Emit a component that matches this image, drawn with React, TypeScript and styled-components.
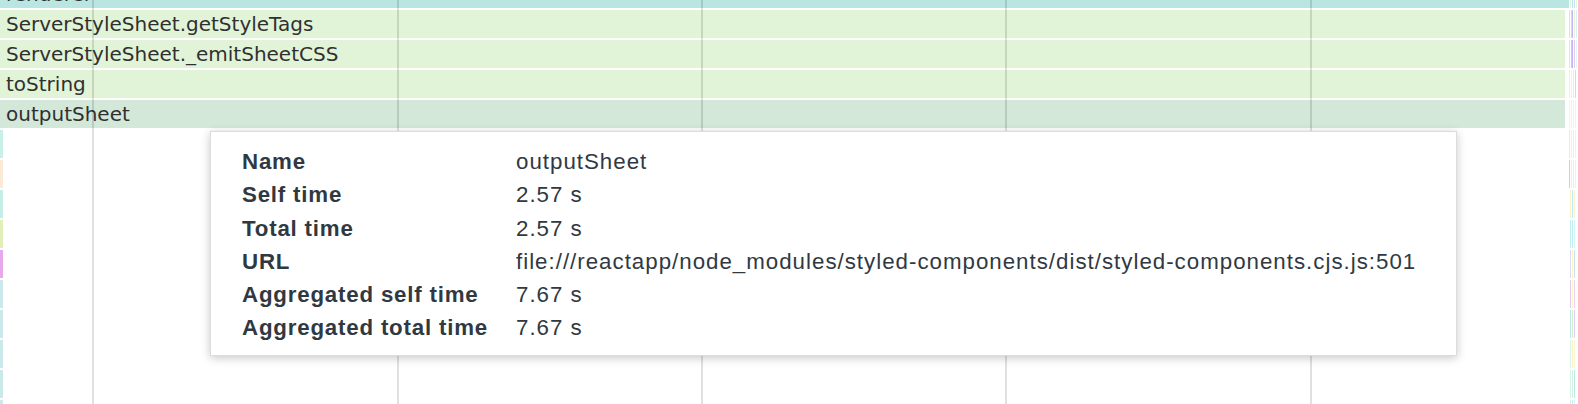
import React from "react";
import styled, { createGlobalStyle } from "styled-components";

const GlobalStyle = createGlobalStyle`
  html, body { margin: 0; padding: 0; background: #ffffff; overflow: hidden; }
  #root { width: 1578px; height: 404px; }
`;

const Chart = styled.div`
  position: relative;
  width: 1578px;
  height: 404px;
  overflow: hidden;
  background: #ffffff;
`;

const Rows = styled.div`
  display: flex;
  flex-direction: column;
  gap: 2px;
  margin-top: -20px;
`;

const Row = styled.div`
  display: flex;
  height: 28px;
  align-items: stretch;
`;

const EdgeStripe = styled.div<{ $c?: string }>`
  width: 3px;
  flex: none;
  background: ${(p) => p.$c ?? "transparent"};
`;

const Bar = styled.div<{ $bg: string; $end: number }>`
  width: ${(p) => p.$end}px;
  flex: none;
  background: ${(p) => p.$bg};
  font-family: "DejaVu Sans", Verdana, sans-serif;
  font-size: 20px;
  line-height: 28px;
  color: #303030;
  padding-left: 6px;
  box-sizing: border-box;
  white-space: nowrap;
  overflow: hidden;
`;

const Spacer = styled.div`
  flex: 1;
`;

const Stripes = styled.div<{ $colors: string[] }>`
  width: 10px;
  flex: none;
  margin-left: auto;
  background: linear-gradient(
    to right,
    ${(p) =>
      p.$colors
        .map((c, i) => `${c} ${i * (100 / p.$colors.length)}%, ${c} ${(i + 1) * (100 / p.$colors.length)}%`)
        .join(", ")}
  );
`;

const GridLine = styled.div<{ $x: number }>`
  position: absolute;
  top: 0;
  bottom: 0;
  left: ${(p) => p.$x}px;
  width: 2px;
  background: rgba(0, 0, 0, 0.12);
  pointer-events: none;
`;

const Tooltip = styled.div`
  position: absolute;
  left: 210px;
  top: 131px;
  width: 1247px;
  height: 225px;
  box-sizing: border-box;
  background: #ffffff;
  border: 1px solid #dcdcdc;
  box-shadow: 0 2px 9px rgba(0, 0, 0, 0.22);
  padding: 13px 0 0 31px;
`;

const InfoGrid = styled.div`
  display: grid;
  grid-template-columns: 274px auto;
  font-family: "Liberation Sans", Arial, Helvetica, sans-serif;
  font-size: 22.3px;
  line-height: 33.3px;
  color: #303942;
  white-space: nowrap;
`;

const Label = styled.div`
  font-weight: 700;
  letter-spacing: 0.8px;
`;

const Value = styled.div`
  font-weight: 400;
  letter-spacing: 1px;
`;

const W = "#ffffff";
const rowsData = [
  { text: "renderer", bg: "#b9e6e1", end: 1569, left: undefined as string | undefined, stripes: [W, "#e6f5e0", W, "#b9e6e1", W, "#c9e0f5", W, "#e6f5e0", W, W] },
  { text: "ServerStyleSheet.getStyleTags", bg: "#e2f4d8", end: 1565, left: undefined, stripes: [W, "#c6eedf", W, "#b6e6f4", "#c7b4f0", W, "#e2f4d8", W, "#d8f0f8", W] },
  { text: "ServerStyleSheet._emitSheetCSS", bg: "#e2f4d8", end: 1565, left: undefined, stripes: [W, "#e7e0f6", W, "#d8c4f5", "#c7b4f0", W, "#dcd0f5", W, "#e6f4fa", W] },
  { text: "toString", bg: "#e2f4d8", end: 1565, left: undefined, stripes: [W, "#e6f5e0", W, "#fbf2c8", W, "#f7ecc0", W, "#f6d4a8", W, W] },
  { text: "outputSheet", bg: "#d3e8d8", end: 1565, left: undefined, stripes: [W, "#f9f5dc", W, "#fbf0c8", W, "#f9f1d0", W, "#fbf1d4", W, W] },
  { text: "", bg: "", end: 0, left: "#c8f0e6", stripes: [W, "#dbf2d8", W, "#fbf2c8", W, "#f9efc4", W, "#fbf1d4", W, W] },
  { text: "", bg: "", end: 0, left: "#fde9d6", stripes: [W, "#e4c0f0", W, "#fbf2c8", W, "#f9efc4", W, "#fbf1d4", W, W] },
  { text: "", bg: "", end: 0, left: "#c6eee6", stripes: [W, W, "#fbf2c8", W, "#bfeaf4", W, "#fbf1d4", W, W, W] },
  { text: "", bg: "", end: 0, left: "#e2efb8", stripes: [W, W, "#c6f0f4", W, "#c0ecf4", W, "#d4f4f4", W, W, W] },
  { text: "", bg: "", end: 0, left: "#e8a8ec", stripes: [W, W, "#d8dcf6", W, "#fbf2c8", W, "#c8e4f4", W, W, W] },
  { text: "", bg: "", end: 0, left: "#cce8ec", stripes: [W, W, "#e4c8f4", W, "#fbf2c8", W, "#ecd4f4", W, W, W] },
  { text: "", bg: "", end: 0, left: "#cce8ec", stripes: [W, W, "#bfecdc", W, "#d8f0d8", W, "#e0cef4", W, W, W] },
  { text: "", bg: "", end: 0, left: "#cce8ec", stripes: [W, W, "#dcf4e8", W, "#fbf2c8", W, "#fbf1d4", W, W, W] },
  { text: "", bg: "", end: 0, left: "#cce8ec", stripes: [W, W, "#dcf4e8", W, "#d0f0e8", W, "#bfe8dc", W, W, W] },
  { text: "", bg: "", end: 0, left: "#cce8ec", stripes: [W, W, "#dcf4e8", W, "#c8eef0", W, "#d8f0f8", W, W, W] },
];

const info: [string, string][] = [
  ["Name", "outputSheet"],
  ["Self time", "2.57 s"],
  ["Total time", "2.57 s"],
  ["URL", "file:///reactapp/node_modules/styled-components/dist/styled-components.cjs.js:501"],
  ["Aggregated self time", "7.67 s"],
  ["Aggregated total time", "7.67 s"],
];

const gridXs = [92, 397, 701, 1005, 1310];

export default function App() {
  return (
    <>
      <GlobalStyle />
      <Chart>
        <Rows>
          {rowsData.map((r, i) => (
            <Row key={i}>
              {r.end > 0 ? (
                <Bar $bg={r.bg} $end={r.end}>
                  {r.text}
                </Bar>
              ) : (
                <>
                  <EdgeStripe $c={r.left} />
                  <Spacer />
                </>
              )}
              <Stripes $colors={r.stripes} />
            </Row>
          ))}
        </Rows>
        {gridXs.map((x) => (
          <GridLine key={x} $x={x} />
        ))}
        <Tooltip>
          <InfoGrid>
            {info.map(([k, v]) => (
              <React.Fragment key={k}>
                <Label>{k}</Label>
                <Value>{v}</Value>
              </React.Fragment>
            ))}
          </InfoGrid>
        </Tooltip>
      </Chart>
    </>
  );
}
